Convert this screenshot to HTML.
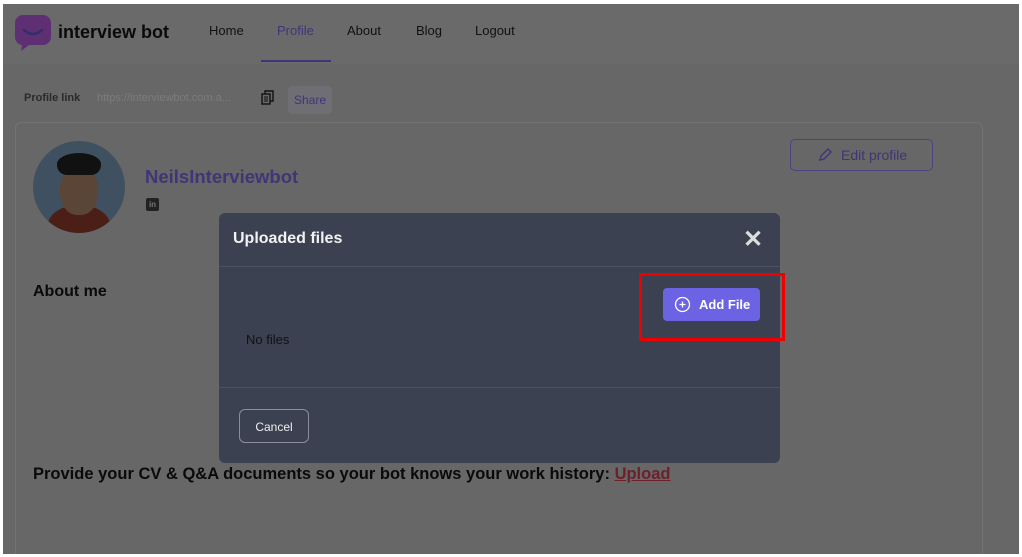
<!DOCTYPE html>
<html><head><style>
*{box-sizing:border-box;margin:0;padding:0}
body{width:1022px;height:557px;overflow:hidden;background:#fff;font-family:"Liberation Sans",sans-serif;position:relative}
#pg{position:absolute;left:3px;top:4px;width:1016px;height:550px;background:#676767;overflow:hidden}
.a{position:absolute;white-space:nowrap}
</style></head><body>
<div id="pg">
<div class="a" style="left:0;top:0;width:1016px;height:60px;background:#6a6a6a"></div>
<svg class="a" style="left:12px;top:10px" width="36" height="38" viewBox="0 0 36 38"><path d="M8 1h20a8 8 0 0 1 8 8v14a8 8 0 0 1-8 8H14l-8 6 1-6a8 8 0 0 1-7-8V9a8 8 0 0 1 8-8z" fill="#5e2f73"/><path d="M9 16q9 8 18 0" stroke="#2f2f6a" stroke-width="2.5" fill="none" stroke-linecap="round"/></svg>
<div class="a" style="left:55px;top:18px;font-size:18px;font-weight:bold;color:#0a0a0a">interview bot</div>
<div class="a" style="left:206px;top:19px;font-size:13px;color:#111">Home</div>
<div class="a" style="left:274px;top:19px;font-size:13px;color:#3f3577">Profile</div>
<div class="a" style="left:258px;top:56px;width:70px;height:2px;background:#3f3577"></div>
<div class="a" style="left:344px;top:19px;font-size:13px;color:#111">About</div>
<div class="a" style="left:413px;top:19px;font-size:13px;color:#111">Blog</div>
<div class="a" style="left:472px;top:19px;font-size:13px;color:#111">Logout</div>
<div class="a" style="left:21px;top:88px;font-size:11px;font-weight:bold;color:#2a2a2a">Profile link</div>
<div class="a" style="left:94px;top:88px;font-size:11px;color:#7c7c7c">https://interviewbot.com.a...</div>
<svg class="a" style="left:258px;top:86px" width="13" height="15" viewBox="0 0 13 15"><rect x="1" y="4" width="8" height="10" fill="none" stroke="#111" stroke-width="1.4"/><path d="M4 4V1h8v10H9" fill="none" stroke="#111" stroke-width="1.4"/><path d="M3 7h4M3 9h4M3 11h4" stroke="#111"/></svg>
<div class="a" style="left:285px;top:82px;width:44px;height:28px;background:#6e6e74;border-radius:4px;font-size:12px;color:#3f3577;padding-top:7px;text-align:center">Share</div>
<div class="a" style="left:12px;top:118px;width:968px;height:460px;border:1px solid #727272;border-radius:6px"></div>
<div class="a" style="left:30px;top:137px;width:92px;height:92px;border-radius:50%;background:#3f5060;overflow:hidden">
<div class="a" style="left:15px;top:64px;width:62px;height:40px;border-radius:50% 50% 0 0;background:#4c1f16"></div>
<div class="a" style="left:27px;top:26px;width:38px;height:48px;border-radius:45%;background:#5b4537"></div>
<div class="a" style="left:24px;top:12px;width:44px;height:22px;border-radius:50% 50% 10px 10px;background:#111"></div>
</div>
<div class="a" style="left:142px;top:162px;font-size:18.5px;font-weight:bold;color:#3f3577">NeilsInterviewbot</div>
<div class="a" style="left:143px;top:194px;width:13px;height:13px;background:#222;border-radius:2px;font-size:8px;color:#777;text-align:center;line-height:13px;font-weight:bold">in</div>
<div class="a" style="left:787px;top:135px;width:143px;height:32px;border:1px solid #4a4380;border-radius:5px;font-size:14px;color:#3f3577;padding:7px 0 0 50px">Edit profile</div>
<svg class="a" style="left:815px;top:144px" width="14" height="14" viewBox="0 0 14 14"><path d="M2 12l1-4 7-7 3 3-7 7z" stroke="#3f3577" fill="none" stroke-width="1.4"/></svg>
<div class="a" style="left:30px;top:279px;font-size:16px;font-weight:bold;color:#0a0a0a">About me</div>
<div class="a" style="left:30px;top:461px;font-size:16.5px;font-weight:bold;color:#0a0a0a">Provide your CV &amp; Q&amp;A documents so your bot knows your work history: <span style="color:#6d1f2a;text-decoration:underline">Upload</span></div>
<div class="a" style="left:216px;top:209px;width:561px;height:250px;background:#3c4152;border-radius:6px">
<div class="a" style="left:14px;top:17px;font-size:16px;font-weight:bold;color:#f2f2f2">Uploaded files</div>
<div class="a" style="left:524px;top:12px;font-size:24px;font-weight:bold;color:#ddd">&#10005;</div>
<div class="a" style="left:0;top:53px;width:561px;height:1px;background:#4c5264"></div>
<div class="a" style="left:444px;top:75px;width:97px;height:33px;background:#6b63e4;border-radius:4px;font-size:13px;font-weight:bold;color:#fff;padding:9px 0 0 36px">Add File</div>
<svg class="a" style="left:455px;top:83px" width="17" height="17" viewBox="0 0 17 17"><circle cx="8.5" cy="8.5" r="7" stroke="#fff" fill="none" stroke-width="1.3"/><path d="M8.5 5.5v6M5.5 8.5h6" stroke="#fff" stroke-width="1.3"/></svg>
<div class="a" style="left:27px;top:119px;font-size:13px;color:#111">No files</div>
<div class="a" style="left:0;top:174px;width:561px;height:1px;background:#4c5264"></div>
<div class="a" style="left:20px;top:196px;width:70px;height:34px;border:1px solid #8a8e9a;border-radius:6px;font-size:12px;color:#eee;text-align:center;padding-top:10px">Cancel</div>
</div>
<div class="a" style="left:636px;top:269px;width:146px;height:68px;border:3px solid #e00"></div>
</div>
</body></html>
